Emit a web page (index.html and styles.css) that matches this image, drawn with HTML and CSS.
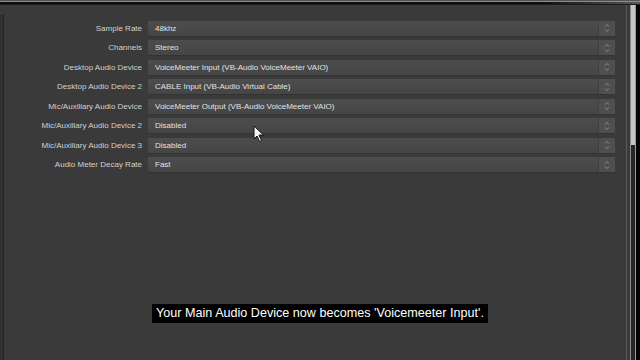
FILE: index.html
```html
<!DOCTYPE html>
<html lang="en">
<head>
    <title>Audio Settings</title>
    <link rel="stylesheet" href="styles.css">
</head>
<body>
    <div class="topbar"></div>
    <div class="window">
        <div class="left-edge"></div>
        <div class="panel">
            <!-- Audio device settings -->
            <div class="settings">
                <label class="name">Sample Rate</label>
                <div class="combo"><span class="value">48khz</span><span class="spin"><svg width="6" height="10" viewBox="0 0 6 10"><path d="M1 3.5 L3 1.5 L5 3.5 M1 6.5 L3 8.5 L5 6.5" fill="none" stroke="#8c8c8c" stroke-width="1"/></svg></span></div>

                <label class="name">Channels</label>
                <div class="combo"><span class="value">Stereo</span><span class="spin"><svg width="6" height="10" viewBox="0 0 6 10"><path d="M1 3.5 L3 1.5 L5 3.5 M1 6.5 L3 8.5 L5 6.5" fill="none" stroke="#8c8c8c" stroke-width="1"/></svg></span></div>

                <label class="name">Desktop Audio Device</label>
                <div class="combo"><span class="value">VoiceMeeter Input (VB-Audio VoiceMeeter VAIO)</span><span class="spin"><svg width="6" height="10" viewBox="0 0 6 10"><path d="M1 3.5 L3 1.5 L5 3.5 M1 6.5 L3 8.5 L5 6.5" fill="none" stroke="#8c8c8c" stroke-width="1"/></svg></span></div>

                <label class="name">Desktop Audio Device 2</label>
                <div class="combo"><span class="value">CABLE Input (VB-Audio Virtual Cable)</span><span class="spin"><svg width="6" height="10" viewBox="0 0 6 10"><path d="M1 3.5 L3 1.5 L5 3.5 M1 6.5 L3 8.5 L5 6.5" fill="none" stroke="#8c8c8c" stroke-width="1"/></svg></span></div>

                <label class="name">Mic/Auxiliary Audio Device</label>
                <div class="combo"><span class="value">VoiceMeeter Output (VB-Audio VoiceMeeter VAIO)</span><span class="spin"><svg width="6" height="10" viewBox="0 0 6 10"><path d="M1 3.5 L3 1.5 L5 3.5 M1 6.5 L3 8.5 L5 6.5" fill="none" stroke="#8c8c8c" stroke-width="1"/></svg></span></div>

                <label class="name">Mic/Auxiliary Audio Device 2</label>
                <div class="combo"><span class="value">Disabled</span><span class="spin"><svg width="6" height="10" viewBox="0 0 6 10"><path d="M1 3.5 L3 1.5 L5 3.5 M1 6.5 L3 8.5 L5 6.5" fill="none" stroke="#8c8c8c" stroke-width="1"/></svg></span></div>

                <label class="name">Mic/Auxiliary Audio Device 3</label>
                <div class="combo"><span class="value">Disabled</span><span class="spin"><svg width="6" height="10" viewBox="0 0 6 10"><path d="M1 3.5 L3 1.5 L5 3.5 M1 6.5 L3 8.5 L5 6.5" fill="none" stroke="#8c8c8c" stroke-width="1"/></svg></span></div>

                <label class="name">Audio Meter Decay Rate</label>
                <div class="combo"><span class="value">Fast</span><span class="spin"><svg width="6" height="10" viewBox="0 0 6 10"><path d="M1 3.5 L3 1.5 L5 3.5 M1 6.5 L3 8.5 L5 6.5" fill="none" stroke="#8c8c8c" stroke-width="1"/></svg></span></div>
            </div>

            <div class="caption-row">
                <span class="caption">Your Main Audio Device now becomes 'Voicemeeter Input'.</span>
            </div>
        </div>
        <div class="right-edge">
            <div class="scrollbar"><div class="thumb"></div></div>
        </div>
    </div>

    <!-- mouse pointer -->
    <svg class="cursor" width="12" height="18" viewBox="0 0 12 18">
        <path d="M1 1 L1 14 L4 11 L6.5 16.5 L8.5 15.5 L6 10 L10.5 10 Z" fill="#f4f4f4" stroke="#111" stroke-width="1"/>
    </svg>
</body>
</html>
```

FILE: styles.css
```css
html, body {
    margin: 0;
    height: 100%;
}

body {
    background-color: #3a3a3a;
    font-family: "Liberation Sans", Arial, sans-serif;
    overflow: hidden;
}

.topbar {
    height: 3px;
    border-top: 1px solid #555;
    border-bottom: 1px solid #1c1c1c;
    background: linear-gradient(to right, #0e0e0e 0%, #0e0e0e 85%, #5a5a5a 100%);
    box-shadow: inset 0 1px 0 #8a8a8a;
}

.window {
    display: flex;
    height: 355px;
}

.left-edge {
    width: 3px;
    margin-top: 8px;
    background-color: #303030;
    border-top: 1px solid #474747;
    border-right: 1px solid #242424;
}

.panel {
    flex: 1;
    display: flex;
    flex-direction: column;
    background-color: #3a3a3a;
}

.settings {
    display: grid;
    grid-template-columns: 138px 467px;
    column-gap: 6px;
    row-gap: 3.5px;
    padding-top: 15.5px;
}

.name {
    font-size: 8px;
    line-height: 16px;
    color: #d0d0d0;
    text-align: right;
    white-space: nowrap;
}

.combo {
    display: flex;
    height: 16px;
    box-sizing: border-box;
    background: linear-gradient(to bottom, #4d4d4d, #454545);
    border-bottom: 1px solid #333;
}

.value {
    flex: 1;
    padding-left: 7px;
    font-size: 8px;
    line-height: 15px;
    color: #e2e2e2;
    white-space: nowrap;
}

.spin {
    width: 16px;
    display: flex;
    align-items: center;
    justify-content: center;
    background-color: #4f4f4f;
    border-left: 1px solid #404040;
}

.caption-row {
    margin-top: auto;
    margin-bottom: 37px;
    display: flex;
    justify-content: center;
    padding-left: 10px;
}

.caption {
    background-color: #000;
    color: #fff;
    font-size: 12.6px;
    line-height: 19px;
    padding: 0 4px;
    white-space: nowrap;
}

.right-edge {
    width: 13px;
    display: flex;
    border-left: 1px solid #5a5a5a;
    background: linear-gradient(to right, #3a3a3a 9px, #050505 9px);
}

.scrollbar {
    margin-left: 3px;
    width: 4px;
    background-color: #262626;
    border-left: 1px solid #8a8a8a;
    border-right: 1px solid #9a9a9a;
}

.thumb {
    height: 140px;
    background-color: #c4c4c4;
}

.cursor {
    position: absolute;
    left: 253px;
    top: 125px;
}
```
